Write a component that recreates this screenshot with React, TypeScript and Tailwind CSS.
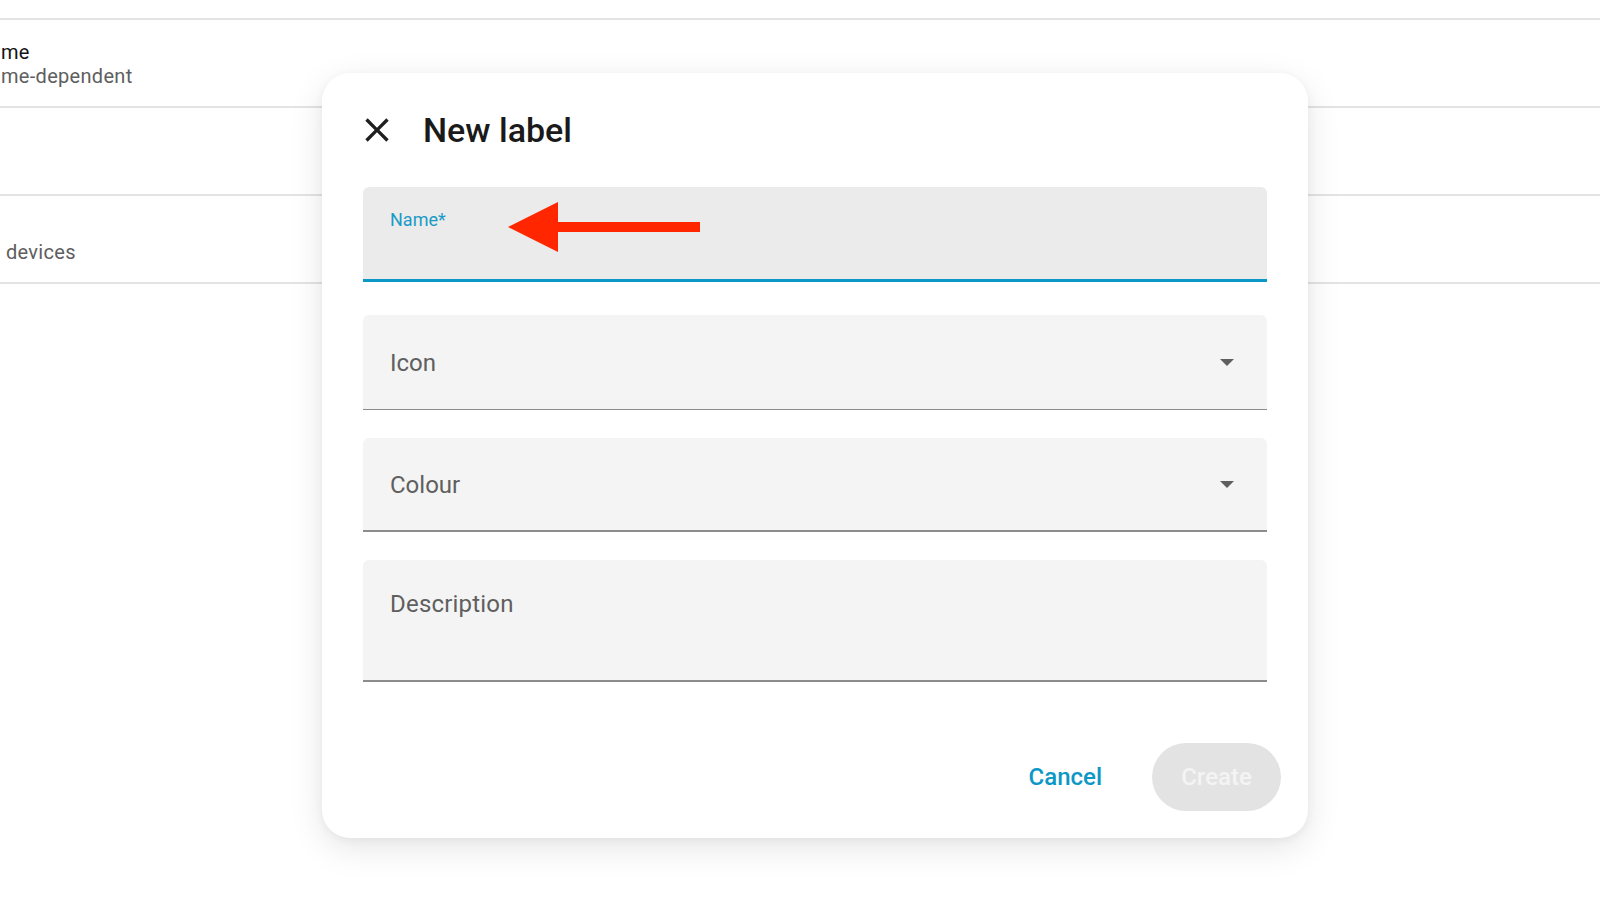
import React from "react";

function CloseIcon() {
  return (
    <svg width="40" height="40" viewBox="0 0 24 24" className="shrink-0 text-[#1f1f1f]">
      <path
        fill="currentColor"
        d="M19,6.41L17.59,5L12,10.59L6.41,5L5,6.41L10.59,12L5,17.59L6.41,19L12,13.41L17.59,19L19,17.59L13.41,12L19,6.41Z"
      />
    </svg>
  );
}

function Caret() {
  return (
    <svg width="14" height="7" viewBox="0 0 14 7" className="shrink-0">
      <path d="M0 0 L14 0 L7 7 Z" fill="#5f5f5f" />
    </svg>
  );
}

export default function App() {
  return (
    <div
      className="relative w-[1600px] h-[900px] overflow-hidden bg-white"
      style={{ fontFamily: "Roboto, 'Liberation Sans', sans-serif" }}
    >
      {/* Page behind the dialog */}
      <div className="pt-[18px]">
        <div className="h-[88px] border-t-2 border-[#e3e3e3] pt-[20px] pl-[1px] text-[20px] leading-[24px] tracking-[0.3px]">
          <div className="text-[#141414]">me</div>
          <div className="text-[#5e5e5e]">me-dependent</div>
        </div>
        <div className="h-[88px] border-t-2 border-[#e3e3e3]" />
        <div className="h-[88px] border-t-2 border-[#e3e3e3] pt-[44px] pl-[6px] text-[20px] leading-[24px] tracking-[0.3px] text-[#5e5e5e]">
          devices
        </div>
        <div className="border-t-2 border-[#e3e3e3]" />
      </div>

      {/* Dialog */}
      <div className="absolute left-[322px] top-[73px] w-[986px] h-[765px] rounded-[28px] bg-white shadow-[0_10px_34px_rgba(0,0,0,0.10),0_2px_10px_rgba(0,0,0,0.05)]">
        <div className="flex items-center pt-[37px] pl-[35px]">
          <CloseIcon />
          <h2 className="ml-[26px] text-[34px] leading-[40px] font-medium text-[#1a1a1a]">New label</h2>
        </div>

        <div className="px-[41px]">
          {/* Name (focused) */}
          <div className="mt-[37px] h-[95px] rounded-t-[6px] bg-[#ebebeb] border-b-[3px] border-[#0b98c6] pl-[27px] pt-[21px]">
            <span className="text-[18px] leading-[24px] text-[#1a9bc6]">Name*</span>
          </div>

          {/* Icon */}
          <div className="mt-[33px] h-[95px] rounded-t-[6px] bg-[#f4f4f4] border-b border-[#8c8c8c] pl-[27px] pr-[33px] flex items-center justify-between">
            <span className="mt-[1px] text-[24px] leading-[32px] text-[#5f5f5f]">Icon</span>
            <Caret />
          </div>

          {/* Colour */}
          <div className="mt-[28px] h-[94px] rounded-t-[6px] bg-[#f4f4f4] border-b-2 border-[#8c8c8c] pl-[27px] pr-[33px] flex items-center justify-between">
            <span className="mt-[1px] text-[24px] leading-[32px] text-[#5f5f5f]">Colour</span>
            <Caret />
          </div>

          {/* Description */}
          <div className="mt-[28px] h-[122px] rounded-t-[6px] bg-[#f4f4f4] border-b-2 border-[#8c8c8c] pl-[27px] pt-[28px]">
            <span className="text-[24px] leading-[32px] tracking-[0.2px] text-[#5f5f5f]">Description</span>
          </div>
        </div>

        <div className="absolute right-[27px] bottom-[27px] flex items-center">
          <button className="h-[68px] px-[24px] rounded-full text-[24px] font-medium text-[#0b98c6]">Cancel</button>
          <button className="ml-[26px] h-[68px] w-[129px] rounded-full bg-[#e3e3e3] text-[24px] font-medium text-[#f4f4f4]">
            Create
          </button>
        </div>
      </div>

      {/* Annotation arrow */}
      <svg className="absolute left-[505px] top-[199px]" width="200" height="56" viewBox="0 0 200 56">
        <polygon points="3,28 53,3 53,53" fill="#ff2600" />
        <rect x="52" y="23" width="143" height="10" fill="#ff2600" />
      </svg>
    </div>
  );
}
